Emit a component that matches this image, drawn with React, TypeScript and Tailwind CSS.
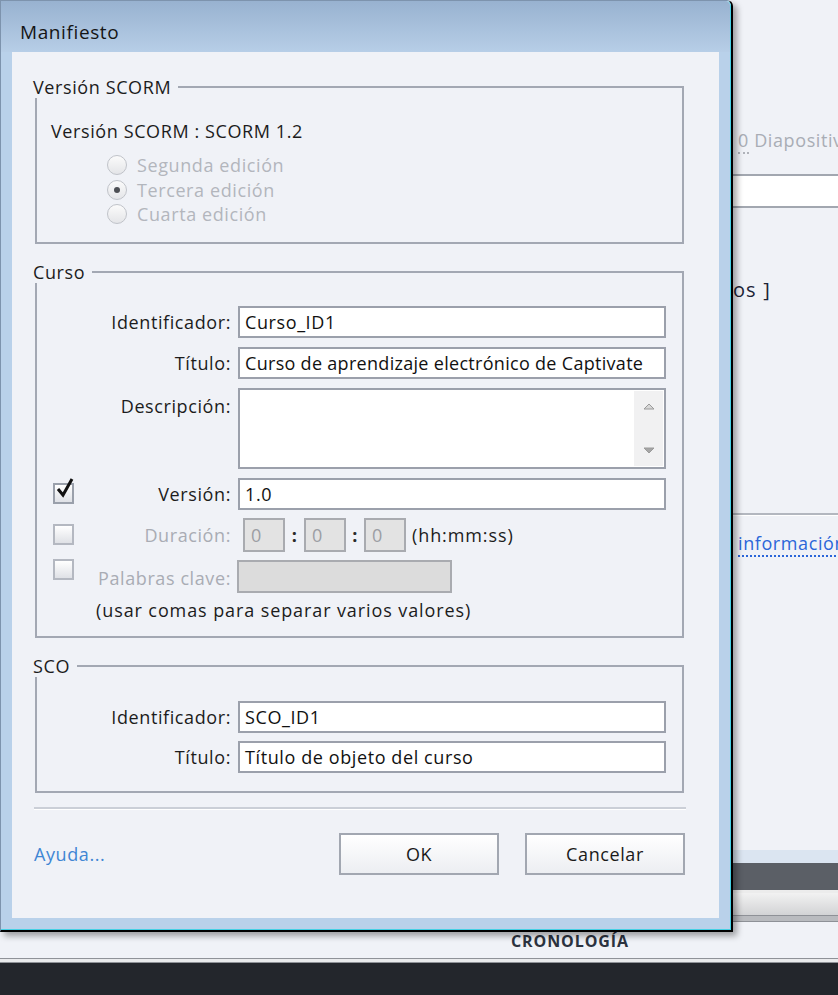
import type { ReactNode } from "react";

const border = "border-[#a3a8b3]";

function Group({
  title,
  children,
  className = "",
}: {
  title: string;
  children: ReactNode;
  className?: string;
}) {
  return (
    <div className={`ml-[23px] w-[649px] flex flex-col ${className}`}>
      <div className="flex h-[22px]">
        <span className="-ml-[2px] pr-[7px] leading-[22px] text-[#1c1c1c]">
          {title}
        </span>
        <div className={`flex-1 mt-[10px] border-t-2 border-r-2 ${border}`} />
      </div>
      <div className={`border-x-2 border-b-2 ${border}`}>{children}</div>
    </div>
  );
}

function Radio({ label, checked }: { label: string; checked?: boolean }) {
  return (
    <div className="h-[24.5px] flex items-center">
      <span className="w-[20px] h-[20px] shrink-0 rounded-full border-[1.5px] border-[#c0c3c9] bg-gradient-to-b from-[#fbfbfb] to-[#e4e5e8] flex items-center justify-center">
        {checked && (
          <span className="w-[6px] h-[6px] rounded-full bg-[#4d4f54]" />
        )}
      </span>
      <span className="ml-[10px] text-[#b3b6bd] leading-[20px] whitespace-nowrap">
        {label}
      </span>
    </div>
  );
}

function CheckBox({
  checked,
  disabled,
  className = "",
}: {
  checked?: boolean;
  disabled?: boolean;
  className?: string;
}) {
  return (
    <span
      className={`relative w-[21px] h-[21px] shrink-0 border-2 bg-gradient-to-b from-[#ffffff] to-[#dfe1e6] ${
        disabled ? "border-[#b4b8c1]" : "border-[#9aa0ab]"
      } ${className}`}
    >
      {checked && (
        <svg
          className="absolute -top-[8px] left-[1px] overflow-visible"
          width="18"
          height="22"
          viewBox="0 0 18 22"
        >
          <path
            d="M2 12 L7 18 L16 2"
            fill="none"
            stroke="#111"
            strokeWidth="3"
            strokeLinejoin="miter"
          />
        </svg>
      )}
    </span>
  );
}

function TextInput({
  value,
  className = "w-[428px]",
}: {
  value: string;
  className?: string;
}) {
  return (
    <div
      className={`h-[32px] border-2 border-[#9ba0ab] bg-white pl-[5px] flex items-center text-[#111] whitespace-nowrap overflow-hidden ${className}`}
    >
      {value}
    </div>
  );
}

function Label({
  children,
  disabled,
  className = "",
}: {
  children: ReactNode;
  disabled?: boolean;
  className?: string;
}) {
  return (
    <span
      className={`w-[157px] shrink-0 text-right leading-[20px] whitespace-nowrap ${
        disabled ? "text-[#a9acb4]" : "text-[#1c1c1c]"
      } ${className}`}
    >
      {children}
    </span>
  );
}

function TimeBox() {
  return (
    <div className="w-[42px] h-[34px] border-2 border-[#a9abb0] bg-[#e3e3e3] pl-[6px] flex items-center text-[#9c9ea3]">
      0
    </div>
  );
}

function Button({ children }: { children: ReactNode }) {
  return (
    <button className="w-[160px] h-[42px] border-2 border-[#a2a7b1] bg-gradient-to-b from-[#ffffff] to-[#eceef2] text-[#1a1a1a]">
      {children}
    </button>
  );
}

function Background() {
  return (
    <div className="flex flex-col h-full">
      <div className="h-[130px] shrink-0" />
      <div className="h-[20px] leading-[20px] pl-[738px] text-[#a9adb5] whitespace-nowrap">
        <span className="border-b-2 border-dotted border-[#b0b3ba]">0</span>{" "}
        Diapositivas
      </div>
      <div className="h-[24px] shrink-0" />
      <div className="h-[34px] shrink-0 border-y-2 border-[#a2a7b0] bg-white" />
      <div className="h-[72px] shrink-0" />
      <div className="w-[771px] h-[20px] leading-[20px] text-right text-[#1c2436] text-[20px] tracking-[1.2px] whitespace-nowrap">
        [ Sin objetos ]
      </div>
      <div className="h-[213px] shrink-0" />
      <div className="h-[3px] shrink-0 bg-[#b3b7bf] border-b border-white" />
      <div className="h-[17px] shrink-0" />
      <div className="h-[20px] leading-[20px] pl-[738px] whitespace-nowrap">
        <span className="text-[#2b66d9] border-b-2 border-dotted border-[#2b66d9]">
          información adicional
        </span>
      </div>
      <div className="flex-1" />
      <div className="h-[13px] shrink-0 bg-[#dbe5f1]" />
      <div className="h-[27px] shrink-0 bg-[#5b5f66]" />
      <div className="h-[3px] shrink-0 bg-[#ececec]" />
      <div className="h-[22px] shrink-0 bg-gradient-to-b from-[#f2f2f2] to-[#d2d3d5]" />
      <div className="h-[7px] shrink-0 bg-[#b9bbbf] border-y border-[#8e9197]" />
      <div className="h-[36px] shrink-0 bg-[#f0f2f7] pl-[511px] pt-[2px] flex items-center">
        <span className="text-[16px] font-bold text-[#2c3340] tracking-[0.9px]">
          CRONOLOGÍA
        </span>
      </div>
      <div className="h-[5px] shrink-0 bg-[#e9eaec] border-y border-[#8f9298]" />
      <div className="h-[32px] shrink-0 bg-[#23262c]" />
    </div>
  );
}

function ManifestDialog() {
  return (
    <div className="absolute left-0 top-0 w-[733px] h-[932px] border-l border-t border-[#7d93ad] border-r-2 border-b-2 border-r-black border-b-black shadow-[4px_4px_6px_rgba(0,0,0,0.35)] rounded-tr-[6px]">
      <div className="h-full flex flex-col border-r border-b border-[#45d0e4] bg-[#b9d1ea] rounded-tr-[5px]">
        <div className="h-[51px] shrink-0 bg-gradient-to-b from-[#98b2d0] to-[#b7cee7] pl-[19px] flex items-center rounded-tr-[5px]">
          <span className="text-[19px] text-[#151515] mt-[10px]">Manifiesto</span>
        </div>
        <div className="mx-[11px] h-[866px] shrink-0 bg-[#f0f2f7] flex flex-col pt-[24px]">
          <Group title="Versión SCORM">
            <div className="pt-[23px] pl-[14px] pb-[15px]">
              <div className="leading-[20px] text-[#1c1c1c]">
                Versión SCORM : SCORM 1.2
              </div>
              <div className="mt-[12px] pl-[56px] flex flex-col">
                <Radio label="Segunda edición" />
                <Radio label="Tercera edición" checked />
                <Radio label="Cuarta edición" />
              </div>
            </div>
          </Group>

          <Group title="Curso" className="mt-[17px]">
            <div className="pt-[23px] pb-[16px] pl-[16px] flex flex-col">
              <div className="flex items-center">
                <span className="w-[21px] shrink-0" />
                <Label>Identificador:</Label>
                <TextInput value="Curso_ID1" className="ml-[7px] w-[428px]" />
              </div>
              <div className="mt-[9px] flex items-center">
                <span className="w-[21px] shrink-0" />
                <Label>Título:</Label>
                <TextInput
                  value="Curso de aprendizaje electrónico de Captivate"
                  className="ml-[7px] w-[428px] tracking-[0.3px]"
                />
              </div>
              <div className="mt-[9px] flex items-start">
                <span className="w-[21px] shrink-0" />
                <Label className="mt-[8px]">Descripción:</Label>
                <div className="ml-[7px] w-[428px] h-[81px] border-2 border-[#9ba0ab] bg-white flex justify-end p-[1px]">
                  <div className="w-[29px] h-full bg-[#f1f1f2] flex flex-col items-center justify-between py-[12px]">
                    <svg width="12" height="7" viewBox="0 0 12 7">
                      <path d="M1 6 L6 1 L11 6 Z" fill="#d8d8d8" stroke="#9a9a9a" strokeWidth="1" />
                    </svg>
                    <svg width="12" height="7" viewBox="0 0 12 7">
                      <path d="M1 1 L6 6 L11 1 Z" fill="#a6a6a6" stroke="#9a9a9a" strokeWidth="1" />
                    </svg>
                  </div>
                </div>
              </div>
              <div className="mt-[9px] flex items-center">
                <CheckBox checked />
                <Label>Versión:</Label>
                <TextInput value="1.0" className="ml-[7px] w-[428px]" />
              </div>
              <div className="mt-[8px] flex items-center">
                <CheckBox disabled />
                <Label disabled>Duración:</Label>
                <div className="ml-[12px] flex items-center">
                  <TimeBox />
                  <span className="w-[19px] text-center text-[#2a2a2a] font-bold">:</span>
                  <TimeBox />
                  <span className="w-[18px] text-center text-[#2a2a2a] font-bold">:</span>
                  <TimeBox />
                  <span className="ml-[6px] text-[#1c1c1c] whitespace-nowrap tracking-[0.9px]">
                    (hh:mm:ss)
                  </span>
                </div>
              </div>
              <div className="mt-[8px] flex items-start">
                <CheckBox disabled className="mt-[-1px]" />
                <Label disabled className="mt-[8px]">
                  Palabras clave:
                </Label>
                <div className="ml-[6px] w-[215px] h-[33px] border-2 border-[#a9abb0] bg-[#dcdcdc]" />
              </div>
              <div className="mt-[7px] pl-[43px] leading-[20px] text-[#1c1c1c] whitespace-nowrap tracking-[0.9px]">
                (usar comas para separar varios valores)
              </div>
            </div>
          </Group>

          <Group title="SCO" className="mt-[17px]">
            <div className="pt-[24px] pb-[18px] pl-[16px] flex flex-col">
              <div className="flex items-center">
                <span className="w-[21px] shrink-0" />
                <Label>Identificador:</Label>
                <TextInput value="SCO_ID1" className="ml-[7px] w-[428px]" />
              </div>
              <div className="mt-[8px] flex items-center">
                <span className="w-[21px] shrink-0" />
                <Label>Título:</Label>
                <TextInput
                  value="Título de objeto del curso"
                  className="ml-[7px] w-[428px]"
                />
              </div>
            </div>
          </Group>

          <div className="mt-[14px] ml-[22px] w-[652px] h-[3px] bg-[#cbcfd7] border-b border-white" />

          <div className="mt-[23px] ml-[22px] mr-[34px] flex items-center">
            <span className="text-[#3f86d4]">Ayuda...</span>
            <div className="ml-auto flex gap-[26px]">
              <Button>OK</Button>
              <Button>Cancelar</Button>
            </div>
          </div>
        </div>
      </div>
    </div>
  );
}

export default function App() {
  return (
    <div className="relative w-[838px] h-[995px] overflow-hidden bg-[#f0f2f7] font-['Open_Sans',sans-serif] text-[18px] leading-[20px] tracking-[0.6px]">
      <Background />
      <ManifestDialog />
    </div>
  );
}
